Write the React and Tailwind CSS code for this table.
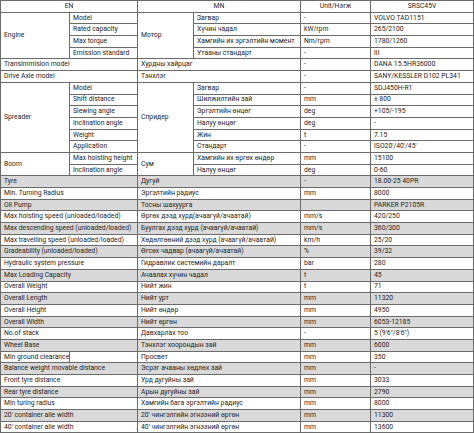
import React from "react";

const cellBase =
  "border-r border-b border-[#6b6b6b] px-[3px] flex items-center whitespace-nowrap overflow-hidden leading-none text-[#1e1e1e]";

function Cell({ children, className = "" }) {
  return <div className={cellBase + " " + className}>{children}</div>;
}

// группы со вложенными строками
const groups = [
  {
    en: "Engine",
    mn: "Мотор",
    span: "row-span-4",
    rows: [
      ["Model", "Загвар", "-", "VOLVO TAD1151"],
      ["Rated capacity", "Хүчин чадал", "kW/rpm", "265/2100"],
      ["Max torque", "Хамгийн их эргэлтийн момент", "Nm/rpm", "1780/1260"],
      ["Emission standard", "Утааны стандарт", "-", "III"],
    ],
  },
];

const spreader = [
  ["Model", "Загвар", "-", "SDJ450H-R1"],
  ["Shift distance", "Шилжилтийн зай", "mm", "± 800"],
  ["Slewing angle", "Эргэлтийн өнцөг", "deg", "+105/-195"],
  ["Inclination angle", "Налуу өнцөг", "deg", "-"],
  ["Weight", "Жин", "t", "7.15"],
  ["Application", "Стандарт", "-", "ISO20'/40'/45'"],
];

const boom = [
  ["Max hoisting height", "Хамгийн их өргөх өндөр", "mm", "15100"],
  ["Inclination angle", "Налуу өнцөг", "deg", "0-60"],
];

const simple = [
  ["Tyre", "Дугуй", "-", "18.00-25 40PR"],
  ["Min. Turning Radius", "Эргэлтийн радиус", "mm", "8000"],
  ["Oil Pump", "Тосны шахуурга", "", "PARKER P2105R"],
  ["Max hoisting speed (unloaded/loaded)", "Өргөх дээд хурд(ачаагүй/ачаатай)", "mm/s", "420/250"],
  ["Max descending speed (unloaded/loaded)", "Буулгах дээд  хурд (ачаагүй/ачаатай)", "mm/s", "360/300"],
  ["Max travelling speed (unloaded/loaded)", "Хөдөлгөөний дээд хурд (ачаагүй/ачаатай)", "km/h", "25/20"],
  ["Gradeability (unloaded/loaded)", "Өгсөх чадвар (ачаагүй/ачаатай)", "%", "39/32"],
  ["Hydraulic system pressure", "Гидравлик системийн даралт", "bar", "280"],
  ["Max Loading Capacity", "Ачаалах хүчин чадал", "t", "45"],
  ["Overall Weight", "Нийт жин", "t", "71"],
  ["Overall Length", "Нийт урт", "mm", "11320"],
  ["Overall Height", "Нийт өндөр", "mm", "4950"],
  ["Overall Width", "Нийт өргөн", "mm", "6053-12185"],
  ["No.of stack", "Давхарлах тоо", "-", "5 (9'6\"/8'6\")"],
  ["Wheel Base", "Тэнхлэг хоорондын зай", "mm", "6000"],
  ["Min ground clearance", "Просвет", "mm", "350", true],
  ["Balance weight movable distance", "Эсрэг ачааны хөдлөх зай", "mm", "-"],
  ["Front tyre distance", "Урд дугуйны зай", "mm", "3033"],
  ["Rear tyre distance", "Арын дугуйны зай", "mm", "2790"],
  ["Min turing radius", "Хамгийн бага эргэлтийн радиус", "mm", "8000"],
  ["20' container aile width", "20' чингэлгийн эгнээний өргөн", "mm", "11300"],
  ["40' container aile width", "40' чингэлгийн эгнээний өргөн", "mm", "13600"],
];

function Group({ en, mn, span, rows }) {
  return (
    <>
      {rows.map((r, i) => (
        <React.Fragment key={i}>
          {i === 0 && <Cell className={span}>{en}</Cell>}
          <Cell>{r[0]}</Cell>
          {i === 0 && <Cell className={span}>{mn}</Cell>}
          <Cell>{r[1]}</Cell>
          <Cell>{r[2]}</Cell>
          <Cell>{r[3]}</Cell>
        </React.Fragment>
      ))}
    </>
  );
}

export default function App() {
  return (
    <div className="w-[474px] h-[433px] overflow-hidden bg-white">
      <div
        className="grid grid-cols-[69px_68px_56px_107px_70px_103px] grid-rows-[repeat(37,11.7px)] border-l border-t border-[#6b6b6b] text-[6.8px]"
        style={{ fontFamily: "Roboto, 'Noto Sans', sans-serif" }}
      >
        <Cell className="col-span-2 justify-center">EN</Cell>
        <Cell className="col-span-2 justify-center">MN</Cell>
        <Cell className="justify-center">Unit/Нэгж</Cell>
        <Cell className="justify-center">SRSC45V</Cell>

        {groups.map((g) => (
          <Group key={g.en} {...g} />
        ))}

        <Cell className="col-span-2">Transimmision model</Cell>
        <Cell className="col-span-2">Хурдны хайрцаг</Cell>
        <Cell>-</Cell>
        <Cell>DANA 15.5HR36000</Cell>

        <Cell className="col-span-2">Drive Axle model</Cell>
        <Cell className="col-span-2">Тэнхлэг</Cell>
        <Cell>-</Cell>
        <Cell>SANY/KESSLER D102 PL341</Cell>

        <Group en="Spreader" mn="Спридер" span="row-span-6" rows={spreader} />
        <Group en="Boom" mn="Сум" span="row-span-2" rows={boom} />

        {simple.map((r, i) => {
          const bg = i % 2 === 0 ? "bg-[#d9d9d9]" : "bg-white";
          return (
            <React.Fragment key={r[0]}>
              {r[4] ? (
                <>
                  <Cell className={bg}>{r[0]}</Cell>
                  <Cell className={bg}></Cell>
                </>
              ) : (
                <Cell className={"col-span-2 " + bg}>{r[0]}</Cell>
              )}
              <Cell className={"col-span-2 " + bg}>{r[1]}</Cell>
              <Cell className={bg}>{r[2]}</Cell>
              <Cell className={bg}>{r[3]}</Cell>
            </React.Fragment>
          );
        })}
      </div>
    </div>
  );
}
